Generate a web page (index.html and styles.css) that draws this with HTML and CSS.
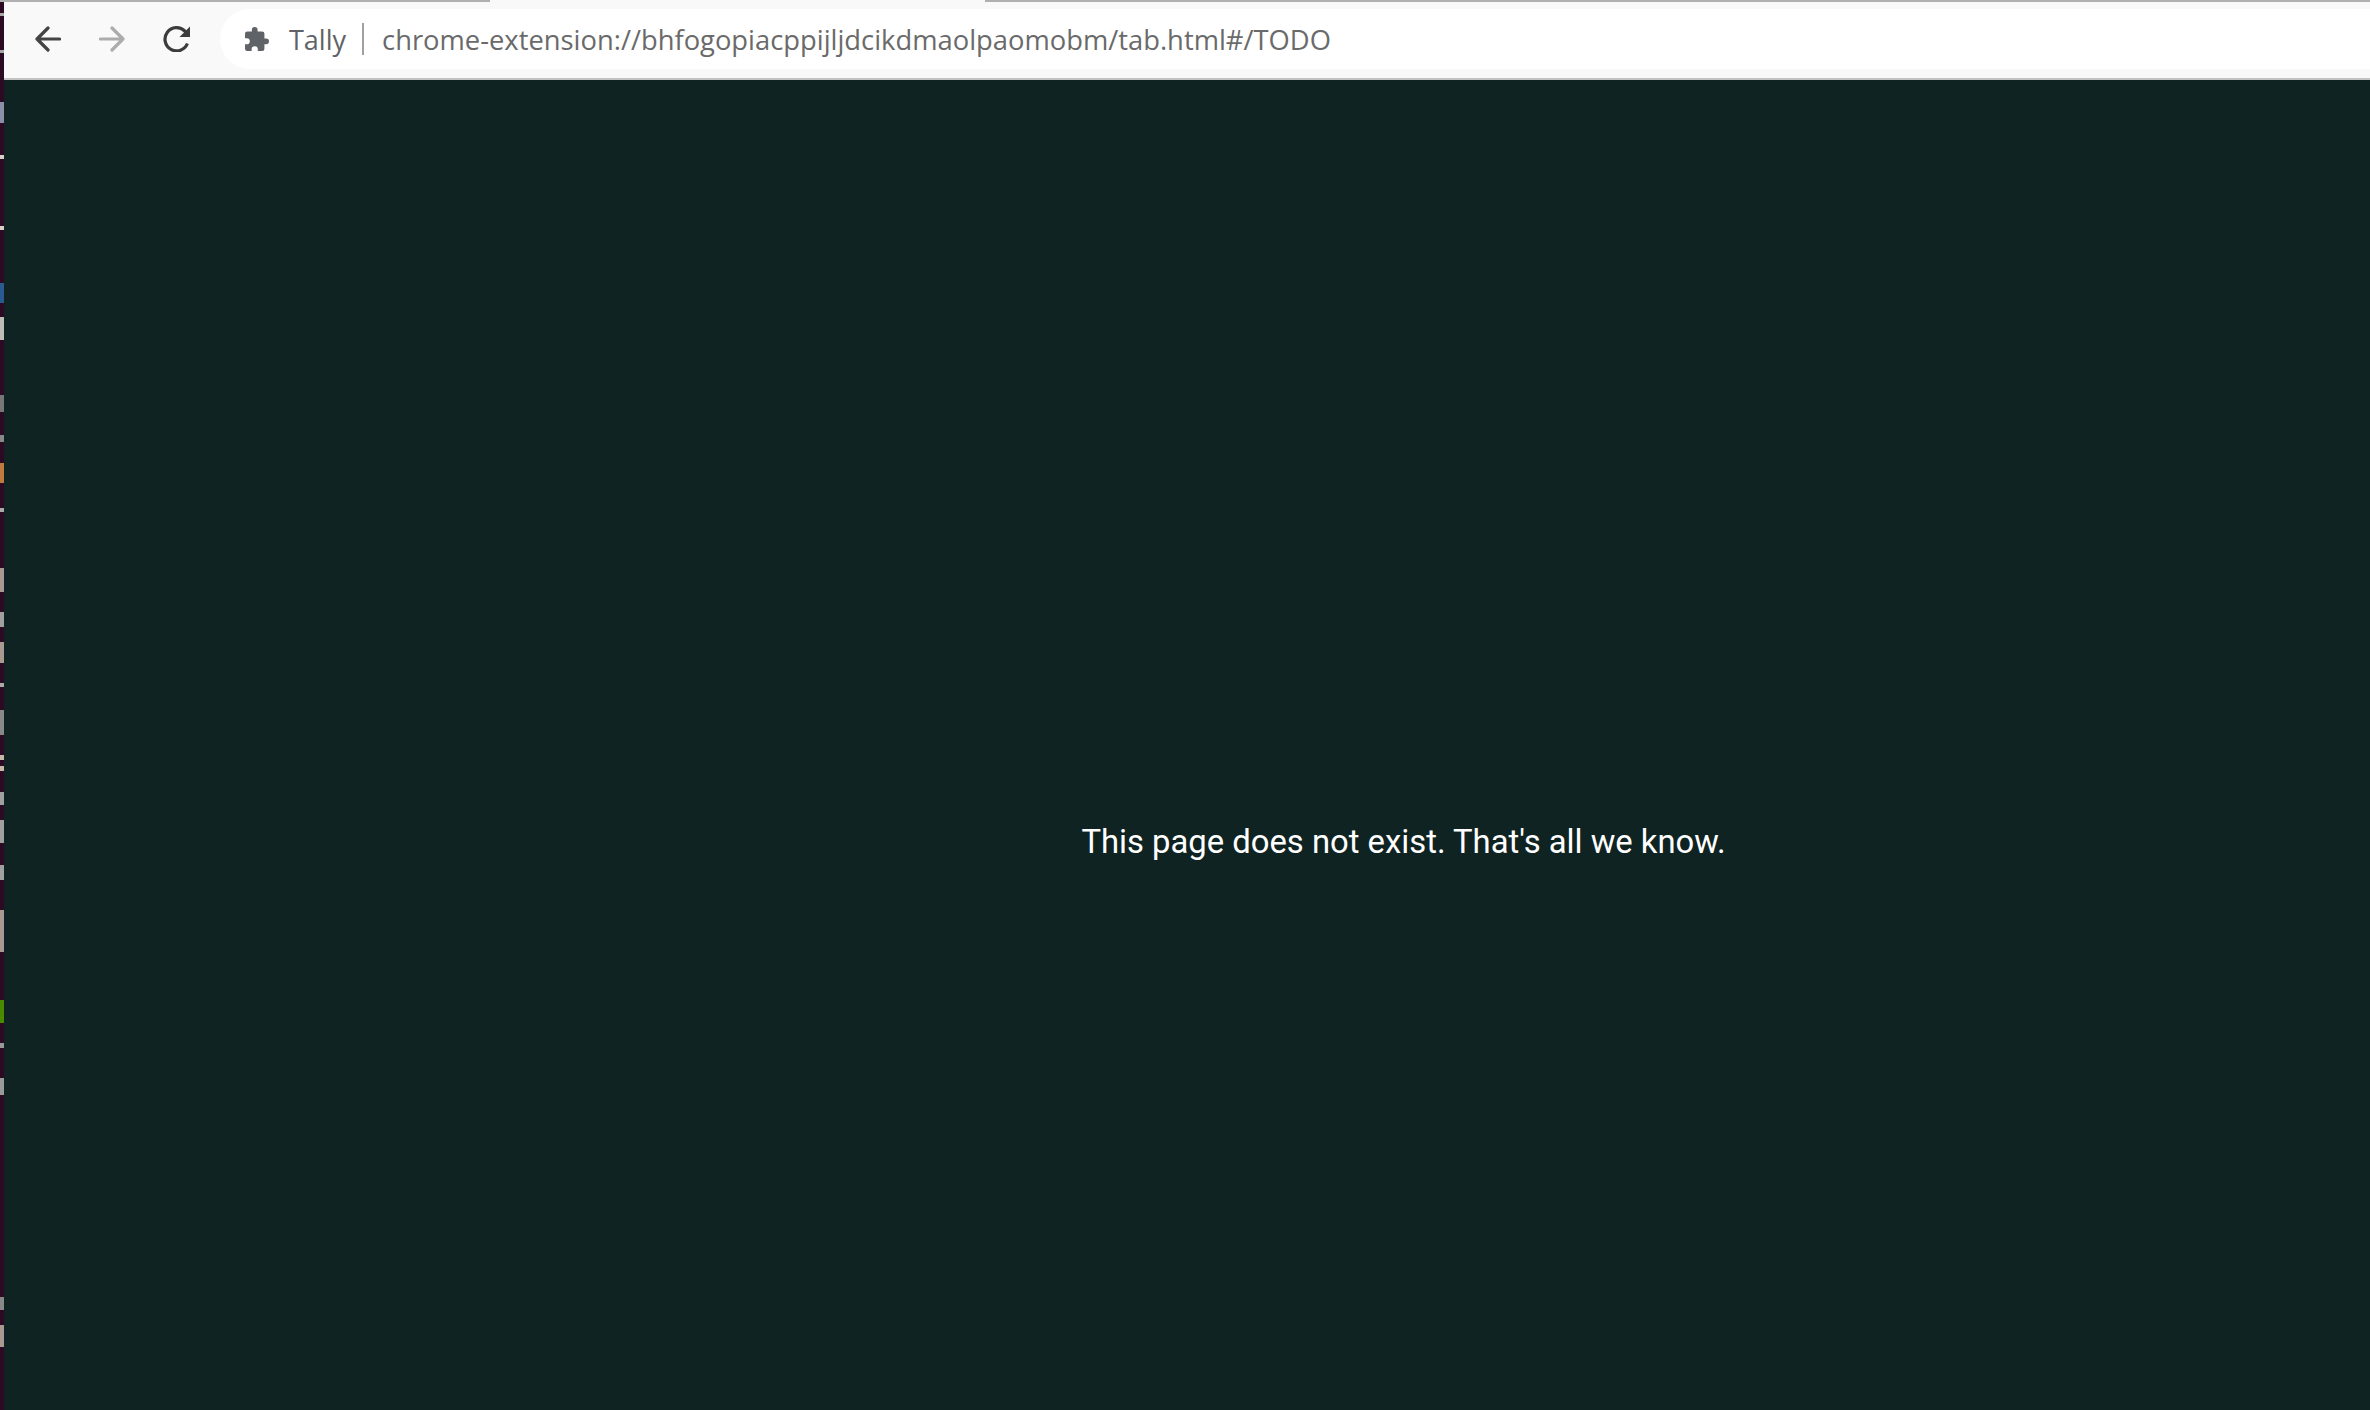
FILE: index.html
```html
<!DOCTYPE html>
<html lang="en">
<head>
    <meta charset="UTF-8">
    <title>Tally</title>
    <link rel="stylesheet" href="styles.css">
</head>
<body>
    <div class="top-line"></div>
    <div class="window">
        <div class="edge"></div>
        <div class="main">
            <div class="toolbar">
                <div class="nav">
                    <svg class="icon back" viewBox="0 0 26 26"><path d="M24.500 13H2M13 2L2 13l11 11"/></svg>
                    <svg class="icon forward" viewBox="0 0 26 26"><path d="M1.500 13H24M13 2l11 11-11 11"/></svg>
                    <svg class="icon reload" viewBox="0 0 27 26"><path class="reload-arc" d="M24.400 17.500A11.600 11.600 0 1 1 21.800 5l3 3"/><path class="reload-tip" d="M27 .5V11H16.500z"/></svg>
                </div>
                <div class="omnibox">
                    <svg class="puzzle" viewBox="2 1 21 21"><path d="M20.500 11H19V7a2 2 0 0 0-2-2h-4V3.500a2.500 2.500 0 0 0-5 0V5H4a2 2 0 0 0-2 2v3.800h1.500a2.700 2.700 0 0 1 0 5.400H2V20a2 2 0 0 0 2 2h3.800v-1.500a2.700 2.700 0 0 1 5.400 0V22H17a2 2 0 0 0 2-2v-4h1.500a2.500 2.500 0 0 0 0-5z"/></svg>
                    <span class="site-name">Tally</span>
                    <span class="divider"></span>
                    <span class="url">chrome-extension://bhfogopiacppijljdcikdmaolpaomobm/tab.html#/TODO</span>
                </div>
            </div>
            <div class="content">
                <p class="message">This page does not exist. That's all we know.</p>
            </div>
        </div>
    </div>
</body>
</html>
```

FILE: styles.css
```css
html, body {
    height: 100%;
}
body {
    margin: 0;
    display: flex;
    flex-direction: column;
    overflow: hidden;
    background-color: #102323;
}
.top-line {
    height: 2px;
    flex-shrink: 0;
    background: linear-gradient(90deg, #b0b0b0 490px, #f9f9f9 490px, #f9f9f9 985px, #b0b0b0 985px);
}
.window {
    display: flex;
    flex: 1;
}
.main {
    display: flex;
    flex-direction: column;
    flex: 1;
}
.toolbar {
    display: flex;
    align-items: center;
    flex-shrink: 0;
    box-sizing: border-box;
    height: 78px;
    padding-bottom: 2px;
    background-color: #f9f9f9;
    border-bottom: 2px solid #c2c2c2;
}
.nav {
    display: flex;
    align-items: center;
    gap: 38px;
    width: 216px;
    padding-left: 31px;
    box-sizing: border-box;
}
.icon {
    width: 26px;
    height: 26px;
    fill: none;
    stroke-width: 3.200;
    stroke-linecap: round;
    stroke-linejoin: round;
}
.back {
    stroke: #444;
}
.forward {
    stroke: #acacac;
}
.reload {
    width: 27px;
}
.reload-arc {
    stroke: #3c3c3c;
    stroke-linecap: butt;
}
.reload-tip {
    fill: #3c3c3c;
}
.omnibox {
    display: flex;
    align-items: center;
    flex: 1;
    height: 60px;
    padding-left: 25px;
    background-color: #fff;
    border-radius: 30px 0 0 30px;
    font-family: "Open Sans", "Noto Sans", sans-serif;
    font-size: 27px;
}
.puzzle {
    width: 24px;
    height: 24px;
    margin-right: 20px;
    fill: #5f6368;
}
.site-name {
    color: #5f6368;
}
.divider {
    width: 2px;
    height: 32px;
    margin: 0 18px 0 16px;
    background-color: #a0a0a0;
}
.url {
    color: #6a6a6a;
    font-size: 27.350px;
    white-space: nowrap;
}
.edge {
    width: 4px;
    flex-shrink: 0;
    background-color: #2c0a24;
    background-repeat: no-repeat;
    background-size: 4px 78px, 4px 1330px;
    background-position: 0 0, 0 78px;
    background-image:
        linear-gradient(180deg,
            #2c0a24 11px, #a8a8a8 11px, #a8a8a8 14px,
            #2c0a24 14px, #2c0a24 48px, #a8a8a8 48px, #a8a8a8 51px,
            #2c0a24 51px),
        linear-gradient(180deg,
            #2c0a24 22px, #8d8fa8 22px, #8d8fa8 43px,
            #2c0a24 43px, #2c0a24 75px, #d8d0c8 75px, #d8d0c8 79px,
            #2c0a24 79px, #2c0a24 146px, #d8d0c8 146px, #d8d0c8 150px,
            #2c0a24 150px, #2c0a24 203px, #2a5a90 203px, #2a5a90 223px,
            #2c0a24 223px, #2c0a24 237px, #bdbdb5 237px, #bdbdb5 260px,
            #2c0a24 260px, #2c0a24 315px, #777 315px, #777 332px,
            #2c0a24 332px, #2c0a24 355px, #888 355px, #888 362px,
            #2c0a24 362px, #2c0a24 383px, #c07a40 383px, #c07a40 403px,
            #2c0a24 403px, #2c0a24 428px, #aaa 428px, #aaa 432px,
            #2c0a24 432px, #2c0a24 488px, #a89a90 488px, #a89a90 512px,
            #2c0a24 512px, #2c0a24 532px, #a0a0a0 532px, #a0a0a0 547px,
            #2c0a24 547px, #2c0a24 562px, #a89a90 562px, #a89a90 583px,
            #2c0a24 583px, #2c0a24 603px, #aaa 603px, #aaa 607px,
            #2c0a24 607px, #2c0a24 630px, #888 630px, #888 655px,
            #2c0a24 655px, #2c0a24 675px, #c8b8a8 675px, #c8b8a8 680px,
            #2c0a24 680px, #2c0a24 686px, #c8b8a8 686px, #c8b8a8 691px,
            #2c0a24 691px, #2c0a24 712px, #a0a0a0 712px, #a0a0a0 725px,
            #2c0a24 725px, #2c0a24 740px, #a0a0a0 740px, #a0a0a0 763px,
            #2c0a24 763px, #2c0a24 785px, #a0a0a0 785px, #a0a0a0 800px,
            #2c0a24 800px, #2c0a24 830px, #a89a90 830px, #a89a90 872px,
            #2c0a24 872px, #2c0a24 920px, #4a8a00 920px, #4a8a00 943px,
            #2c0a24 943px, #2c0a24 963px, #999 963px, #999 968px,
            #2c0a24 968px, #2c0a24 998px, #999 998px, #999 1015px,
            #2c0a24 1015px, #2c0a24 1217px, #888 1217px, #888 1230px,
            #2c0a24 1230px, #2c0a24 1245px, #a89a90 1245px, #a89a90 1267px,
            #2c0a24 1267px);
}
.content {
    display: flex;
    flex: 1;
    align-items: center;
    justify-content: center;
    padding: 194px 0 0 433px;
}
.message {
    margin: 0;
    color: #fff;
    font-family: Roboto, Inter, sans-serif;
    font-size: 32.800px;
    white-space: nowrap;
}
```
